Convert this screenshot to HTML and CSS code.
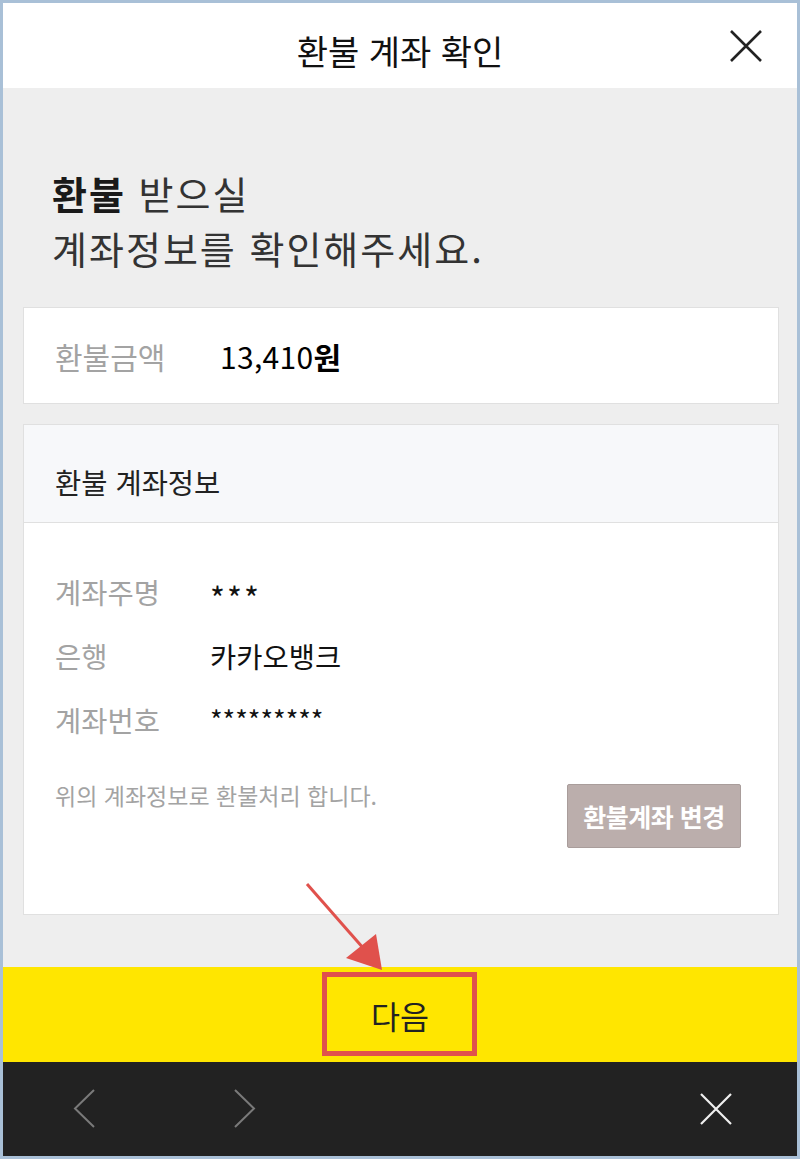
FILE: index.html
```html
<!DOCTYPE html>
<html lang="ko">
<head>
  <meta charset="utf-8">
  <title>환불 계좌 확인</title>
  <link rel="stylesheet" href="styles.css">
</head>
<body>
  <div class="screen">
    <!-- Top Bar -->
    <header class="topbar">
      <span class="topbar-side"></span>
      <h1 class="topbar-title">환불 계좌 확인</h1>
      <span class="topbar-side end">
        <svg class="close-icon" width="34" height="34" viewBox="0 0 34 34">
          <path d="M2 2 L32 32 M32 2 L2 32" stroke="#222" stroke-width="2.6" fill="none"/>
        </svg>
      </span>
    </header>

    <!-- Content -->
    <main class="content">
      <h2 class="lead">
        <span class="lead-line"><strong>환불</strong> 받으실</span>
        <span class="lead-line">계좌정보를 확인해주세요.</span>
      </h2>

      <section class="card amount-card">
        <span class="field-label">환불금액</span>
        <span class="amount-value">13,410<strong>원</strong></span>
      </section>

      <section class="card account-card">
        <div class="card-head">환불 계좌정보</div>
        <div class="card-body">
          <div class="info-row">
            <span class="field-label">계좌주명</span>
            <span class="field-value masked">***</span>
          </div>
          <div class="info-row">
            <span class="field-label">은행</span>
            <span class="field-value">카카오뱅크</span>
          </div>
          <div class="info-row">
            <span class="field-label">계좌번호</span>
            <span class="field-value small">*********</span>
          </div>
          <div class="notice-row">
            <p class="notice">위의 계좌정보로 환불처리 합니다.</p>
            <button class="change-button">환불계좌 변경</button>
          </div>
        </div>
      </section>
    </main>

    <!-- Next Button -->
    <div class="next-bar">
      <button class="next-button">다음</button>
      <span class="mark-box"></span>
    </div>

    <!-- Browser Bar -->
    <nav class="browser-bar">
      <svg class="nav-icon" width="24" height="40" viewBox="0 0 24 40">
        <path d="M21 1 L2 19.5 L21 38" stroke="#7a7a7a" stroke-width="2" fill="none"/>
      </svg>
      <svg class="nav-icon next" width="24" height="40" viewBox="0 0 24 40">
        <path d="M2 1 L21 19.5 L2 38" stroke="#7a7a7a" stroke-width="2" fill="none"/>
      </svg>
      <span class="spacer"></span>
      <svg class="nav-close" width="34" height="34" viewBox="0 0 34 34">
        <path d="M2 2 L32 32 M32 2 L2 32" stroke="#f0f0f0" stroke-width="2.2" fill="none"/>
      </svg>
    </nav>

    <svg class="mark-arrow" width="110" height="110" viewBox="290 870 110 110">
      <line x1="307" y1="884" x2="364" y2="949" stroke="#e0514c" stroke-width="3"/>
      <polygon points="382,970 346,958 376,934" fill="#e0514c"/>
    </svg>
  </div>
</body>
</html>
```

FILE: styles.css
```css
body {
  margin: 0;
  padding: 0;
  background: #fff;
  font-family: "Noto Sans CJK KR", "Noto Sans", sans-serif;
  color: #111;
}

.screen {
  position: relative;
  width: 800px;
  height: 1159px;
  box-sizing: border-box;
  border: 3px solid #a9c0d7;
  display: flex;
  flex-direction: column;
  overflow: hidden;
}

/* Top Bar */
.topbar {
  height: 85px;
  flex-shrink: 0;
  background: #fff;
  display: grid;
  grid-template-columns: 1fr auto 1fr;
  align-items: center;
}

.topbar-title {
  margin: 10px 0 0 0;
  font-size: 34px;
  font-weight: 400;
  color: #111;
}

.topbar-side.end {
  justify-self: end;
  display: flex;
  padding-right: 34px;
}

/* Content */
.content {
  flex: 1;
  background: #eeeeee;
  padding: 0 18px 0 20px;
}

.lead {
  margin: 77px 0 32px 29px;
  font-size: 38px;
  font-weight: 400;
  letter-spacing: 2px;
  color: #333;
}

.lead-line {
  display: block;
  height: 55px;
  line-height: 55px;
}

.lead strong {
  font-weight: 700;
  color: #1a1a1a;
}

.card {
  background: #fff;
  border: 1px solid #e0e0e0;
}

.field-label {
  width: 155px;
  flex-shrink: 0;
  color: #a3a3a3;
  font-size: 28.5px;
}

.amount-card {
  height: 95px;
  display: flex;
  align-items: center;
  padding-left: 31px;
  margin-bottom: 20px;
}

.amount-card .field-label {
  width: 165px;
  font-size: 30px;
}

.amount-value {
  font-size: 30px;
  letter-spacing: 0.3px;
  color: #000;
}

.amount-value strong {
  font-weight: 700;
}

.card-head {
  height: 81px;
  display: flex;
  align-items: center;
  padding: 16px 0 0 31px;
  background: #f7f8fa;
  border-bottom: 1px solid #e0e0e0;
  font-size: 28.5px;
  color: #222;
}

.card-body {
  padding: 36px 37px 66px 31px;
}

.info-row {
  height: 64px;
  display: flex;
  align-items: center;
}

.field-value {
  font-size: 28.5px;
  color: #111;
}

.field-value.masked {
  font-size: 32px;
  letter-spacing: 2px;
  padding-top: 12px;
}

.field-value.small {
  font-size: 27px;
}

.notice-row {
  display: flex;
  justify-content: space-between;
  align-items: flex-start;
  margin-top: 33px;
}

.notice {
  margin: 0;
  font-size: 23px;
  line-height: 1;
  color: #a3a3a3;
}

.change-button {
  width: 174px;
  height: 64px;
  background: #bbaeac;
  border: 1px solid #a99d9b;
  border-radius: 2px;
  color: #fff;
  font-family: inherit;
  font-size: 25px;
  font-weight: 700;
  letter-spacing: -0.5px;
  padding: 0;
}

/* Next Button */
.next-bar {
  position: relative;
  height: 95px;
  flex-shrink: 0;
  background: #ffe600;
  display: flex;
  align-items: center;
  justify-content: center;
}

.next-button {
  background: none;
  border: none;
  padding: 0;
  font-family: inherit;
  font-size: 31.5px;
  color: #222;
}

.mark-box {
  position: absolute;
  left: 319px;
  top: 5px;
  width: 155px;
  height: 84px;
  box-sizing: border-box;
  border: 5px solid #e0514c;
}

.mark-arrow {
  position: absolute;
  left: 287px;
  top: 867px;
}

/* Browser Bar */
.browser-bar {
  height: 94px;
  flex-shrink: 0;
  background: #222222;
  display: flex;
  align-items: center;
  padding: 0 64px 0 70px;
}

.nav-icon.next {
  margin-left: 136px;
}

.spacer {
  flex: 1;
}
```
